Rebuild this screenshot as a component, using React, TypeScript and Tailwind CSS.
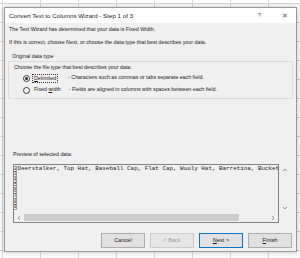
const ui = { fontFamily: '"Liberation Sans", Arial, sans-serif' };
const mono = { fontFamily: '"Liberation Mono", "Courier New", monospace' };

const previewRows = [
  { n: "2", text: "Deerstalker, Top Hat, Baseball Cap, Flat Cap, Wooly Hat, Barretina, Bucket" },
  { n: "3", text: "" },
  { n: "4", text: "" },
  { n: "5", text: "" },
  { n: "6", text: "" },
  { n: "7", text: "" },
  { n: "8", text: "" },
  { n: "9", text: "" },
];

function Chevron({ dir }: { dir: "up" | "down" | "left" | "right" }) {
  const d = {
    up: "M1 4 L3 2 L5 4",
    down: "M1 2 L3 4 L5 2",
    left: "M4 1 L2 3 L4 5",
    right: "M2 1 L4 3 L2 5",
  }[dir];
  return (
    <svg width="6" height="6" viewBox="0 0 6 6" className="block">
      <path d={d} fill="none" stroke="#8a8a8a" strokeWidth="0.9" />
    </svg>
  );
}

function Radio({ checked }: { checked?: boolean }) {
  return (
    <span className="flex h-[7px] w-[7px] items-center justify-center rounded-full border border-[#333] bg-white">
      {checked && <span className="h-[3px] w-[3px] rounded-full bg-[#222]" />}
    </span>
  );
}

function Button({ children, variant }: { children: React.ReactNode; variant?: "default" | "disabled" }) {
  const border =
    variant === "default" ? "border-[#0078d7]" : variant === "disabled" ? "border-[#cccccc]" : "border-[#adadad]";
  const text = variant === "disabled" ? "text-[#a0a0a0]" : "text-[#1a1a1a]";
  const bg = variant === "disabled" ? "bg-[#e6e6e6]" : "bg-[#e1e1e1]";
  return (
    <div className={`flex h-[15px] w-[44px] items-center justify-center border text-[5.6px] ${border} ${bg} ${text}`}>
      {children}
    </div>
  );
}

export default function App() {
  return (
    <div
      className="h-[258px] w-[300px] overflow-hidden bg-white bg-[linear-gradient(to_right,#dadada_1px,transparent_1px),linear-gradient(to_bottom,#dadada_1px,transparent_1px)] bg-[size:38px_19px] bg-[position:2px_3px] pl-[4px] pt-[7px]"
      style={ui}
    >
      <div className="flex h-[245px] w-[293px] flex-col border border-[#9a9a9a] bg-[#f0f0f0] shadow-[0_0_6px_rgba(0,0,0,0.25)]">
        {/* title bar */}
        <div className="flex h-[15px] items-center bg-white pl-[4px] pr-[8px] text-[6.2px] text-[#1a1a1a]">
          <span>Convert Text to Columns Wizard - Step 1 of 3</span>
          <span className="ml-auto text-[6px] text-[#555]">?</span>
          <span className="ml-[21px] text-[6.5px] text-[#555]">✕</span>
        </div>

        {/* body */}
        <div className="flex flex-1 flex-col px-[3px] pt-[2px] text-[5.3px] text-[#1a1a1a]">
          <div className="flex h-[10px] items-center pl-[1px]">
            The Text Wizard has determined that your data is Fixed Width.
          </div>
          <div className="mt-[3px] flex h-[10px] items-center pl-[1px]">
            If this is correct, choose Next, or choose the data type that best describes your data.
          </div>
          <div className="mt-[4px] flex h-[9px] items-center pl-[4px]">Original data type</div>
          <div className="flex h-[38px] flex-col border border-[#dcdcdc] pl-[5px] pt-[1px]">
            <div className="flex h-[10px] items-center">Choose the file type that best describes your data:</div>
            <div className="flex h-[10px] items-center pl-[9px]">
              <Radio checked />
              <span className="ml-[2px] border border-dotted border-[#333] px-[1px] leading-[7px]">
                <span className="underline">D</span>elimited
              </span>
              <span className="ml-[10px]">- Characters such as commas or tabs separate each field.</span>
            </div>
            <div className="mt-[2px] flex h-[10px] items-center pl-[9px]">
              <Radio />
              <span className="ml-[3px] px-[1px]">
                Fixed <span className="underline">w</span>idth
              </span>
              <span className="ml-[7px]">- Fields are aligned in columns with spaces between each field.</span>
            </div>
          </div>

          <div className="mt-[51px] flex h-[10px] items-center pl-[5px]">Preview of selected data:</div>

          {/* preview */}
          <div className="mt-[4px] ml-[5px] flex h-[59px]">
            <div className="flex w-[266px] flex-col border border-[#828282] bg-[#f0f0f0]">
              <div className="h-[48px] overflow-hidden pt-[1px]" style={mono}>
                {previewRows.map((r) => (
                  <div key={r.n} className="flex h-[5.5px] items-center text-[5.9px] leading-[5.5px] text-[#222]">
                    <span className="w-[3px] shrink-0 overflow-hidden border-b border-r border-[#9a9a9a] text-[4.6px] leading-[5px]">
                      {r.n}
                    </span>
                    <span className="whitespace-nowrap pl-[0.5px]">{r.text}</span>
                  </div>
                ))}
              </div>
              <div className="flex h-[9px] items-center gap-[2px] px-[2px]">
                <Chevron dir="left" />
                <div className="h-[7px] w-[215px] bg-[#cdcdcd]" />
                <div className="ml-auto">
                  <Chevron dir="right" />
                </div>
              </div>
            </div>
            <div className="flex w-[11px] flex-col items-center justify-between py-[3px] pb-[12px]">
              <Chevron dir="up" />
              <Chevron dir="down" />
            </div>
          </div>

          {/* buttons */}
          <div className="mt-[10px] flex justify-end gap-[5px] pr-[1px]">
            <Button>Cancel</Button>
            <Button variant="disabled">&lt; Back</Button>
            <Button variant="default">
              <span>
                <span className="underline">N</span>ext &gt;
              </span>
            </Button>
            <Button>
              <span>
                <span className="underline">F</span>inish
              </span>
            </Button>
          </div>
        </div>
      </div>
    </div>
  );
}
